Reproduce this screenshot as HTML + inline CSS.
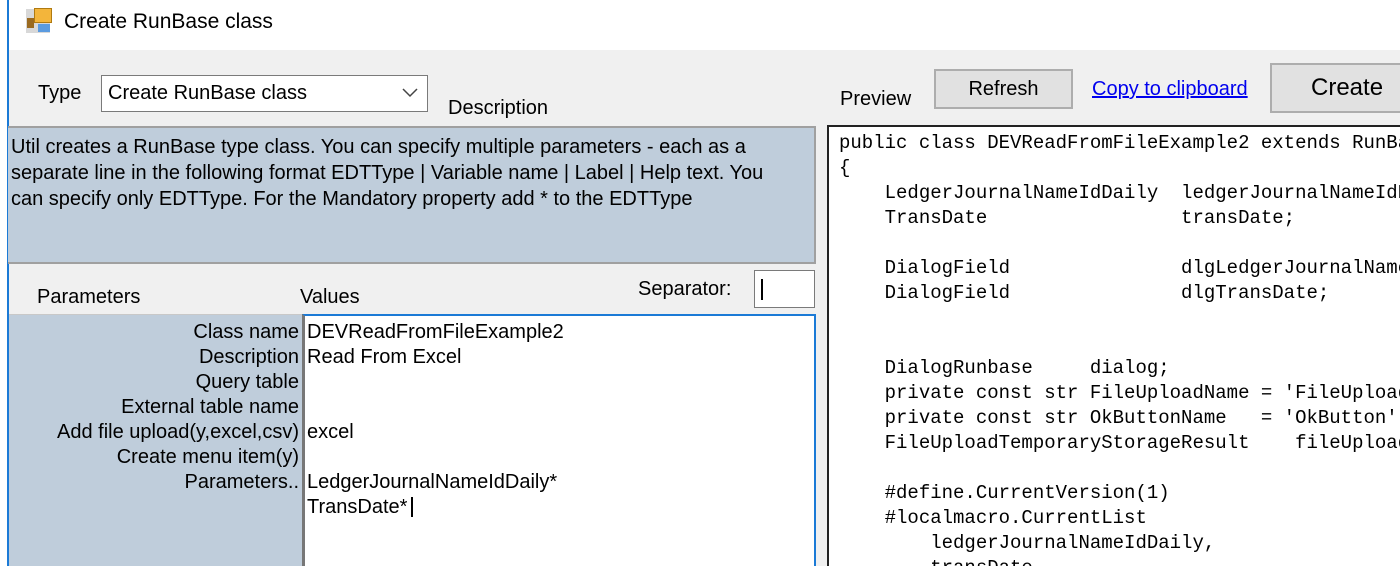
<!DOCTYPE html>
<html style="overflow:hidden"><head><style>
html,body{overflow:hidden}
body{margin:0;width:1400px;height:566px;background:#fff;font-family:"Liberation Sans",sans-serif;position:relative}
.a{position:absolute;white-space:pre}
.ui{font-size:20px;color:#000}
.code{font-family:"Liberation Mono",monospace;font-size:19px;line-height:25px;color:#000}
</style></head><body>
<div class="a" style="left:0;top:0;width:7px;height:566px;background:#fff"></div>
<div class="a" style="left:7px;top:0;width:2px;height:566px;background:#1b7ad6"></div>
<div class="a" style="left:9px;top:50px;width:1391px;height:516px;background:#f0f0f0"></div>
<div class="a" style="left:26px;top:9px;width:24px;height:24px;background:#d8d8d8"></div>
<div class="a" style="left:34px;top:8px;width:16px;height:13px;background:#f3b53b;border:1px solid #b07a10"></div>
<div class="a" style="left:27px;top:18px;width:7px;height:10px;background:#9a6a20"></div>
<div class="a" style="left:38px;top:24px;width:12px;height:8px;background:#5b9be0"></div>
<div class="a" style="left:64px;top:10px;font-size:21px">Create RunBase class</div>

<div class="a ui" style="left:38px;top:82px">Type</div>
<div class="a" style="left:101px;top:75px;width:327px;height:37px;background:#fff;border:1px solid #7a7a7a;box-sizing:border-box"></div>
<div class="a ui" style="left:108px;top:82px">Create RunBase class</div>
<svg class="a" style="left:402px;top:88px" width="16" height="10"><path d="M1 1 L8 8 L15 1" fill="none" stroke="#444" stroke-width="1.5"/></svg>
<div class="a ui" style="left:448px;top:97px">Description</div>

<div class="a" style="left:8px;top:126px;width:808px;height:138px;background:#bfcddb;border:2px solid #a0a0a0;border-left:none;box-sizing:border-box"></div>
<div class="a ui" style="left:11px;top:134px;line-height:26px;white-space:normal;width:775px">Util creates a RunBase type class. You can specify multiple parameters - each as a separate line in the following format EDTType | Variable name | Label | Help text. You can specify only EDTType. For the Mandatory property add * to the EDTType</div>

<div class="a ui" style="left:37px;top:286px">Parameters</div>
<div class="a ui" style="left:300px;top:286px">Values</div>
<div class="a ui" style="left:638px;top:278px">Separator:</div>
<div class="a" style="left:754px;top:270px;width:61px;height:38px;background:#fff;border:1px solid #7a7a7a;box-sizing:border-box"></div>
<div class="a" style="left:761px;top:279px;width:2px;height:21px;background:#000"></div>

<div class="a" style="left:9px;top:314px;width:293px;height:252px;background:#bfcddb;border-top:1px solid #c8c8c8"></div>
<div class="a" style="left:302px;top:314px;width:514px;height:252px;background:#fff;border:2px solid #1b7ad6;border-bottom:none;border-left:3px solid #777;box-sizing:border-box"></div>
<div class="a ui" style="left:9px;top:320px;width:290px;text-align:right;line-height:25px">Class name
Description
Query table
External table name
Add file upload(y,excel,csv)
Create menu item(y)
Parameters..</div>
<div class="a ui" style="left:307px;top:320px;line-height:25px">DEVReadFromFileExample2
Read From Excel


excel

LedgerJournalNameIdDaily*
TransDate*</div>
<div class="a" style="left:411px;top:497px;width:2px;height:20px;background:#000"></div>

<div class="a ui" style="left:840px;top:88px">Preview</div>
<div class="a" style="left:934px;top:69px;width:139px;height:40px;background:#e1e1e1;border:2px solid #adadad;box-sizing:border-box"></div>
<div class="a ui" style="left:934px;top:78px;width:139px;text-align:center">Refresh</div>
<div class="a ui" style="left:1092px;top:78px;color:#0000ee;text-decoration:underline">Copy to clipboard</div>
<div class="a" style="left:1270px;top:63px;width:130px;height:50px;background:#e1e1e1;border:2px solid #adadad;border-right:none;box-sizing:border-box"></div>
<div class="a" style="left:1311px;top:74px;font-size:24px">Create</div>

<div class="a" style="left:827px;top:125px;width:573px;height:441px;background:#fff;border:2px solid #222;border-right:none;border-bottom:none;box-sizing:border-box;overflow:hidden">
<div class="a code" style="left:10px;top:4px">public class DEVReadFromFileExample2 extends RunBase
{
    LedgerJournalNameIdDaily  ledgerJournalNameIdDaily;
    TransDate                 transDate;

    DialogField               dlgLedgerJournalNameIdDaily;
    DialogField               dlgTransDate;


    DialogRunbase     dialog;
    private const str FileUploadName = 'FileUpload';
    private const str OkButtonName   = 'OkButton';
    FileUploadTemporaryStorageResult    fileUploadResult;

    #define.CurrentVersion(1)
    #localmacro.CurrentList
        ledgerJournalNameIdDaily,
        transDate</div>
</div>
</body></html>
